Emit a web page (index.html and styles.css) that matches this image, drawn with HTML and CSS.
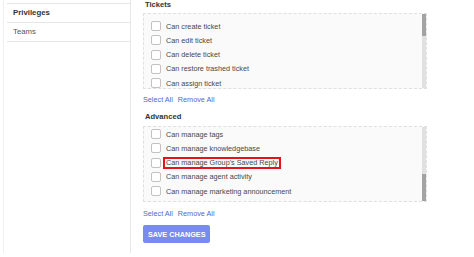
FILE: index.html
```html
<!DOCTYPE html>
<html lang="en">
<head>
<meta charset="utf-8">
<title>Privileges</title>
<link rel="stylesheet" href="styles.css">
</head>
<body>
<div class="page">
  <aside class="sidebar">
    <ul class="nav">
      <li class="nav-item active">Privileges</li>
      <li class="nav-item">Teams</li>
    </ul>
  </aside>
  <main class="main">
    <h3 class="group-title">Tickets</h3>
    <div class="perm-box">
      <div class="perm-list">
        <label class="perm"><input type="checkbox" class="cb"><span>Can create ticket</span></label>
        <label class="perm"><input type="checkbox" class="cb"><span>Can edit ticket</span></label>
        <label class="perm"><input type="checkbox" class="cb"><span>Can delete ticket</span></label>
        <label class="perm"><input type="checkbox" class="cb"><span>Can restore trashed ticket</span></label>
        <label class="perm"><input type="checkbox" class="cb"><span>Can assign ticket</span></label>
      </div>
      <div class="scroll-track"><div class="scroll-thumb thumb-top"></div></div>
    </div>
    <div class="bulk"><a href="#">Select All</a><a href="#">Remove All</a></div>

    <h3 class="group-title adv">Advanced</h3>
    <div class="perm-box">
      <div class="perm-list list-adv">
        <label class="perm"><input type="checkbox" class="cb"><span>Can manage tags</span></label>
        <label class="perm"><input type="checkbox" class="cb"><span>Can manage knowledgebase</span></label>
        <label class="perm"><input type="checkbox" class="cb"><span class="highlight">Can manage Group's Saved Reply</span></label>
        <label class="perm"><input type="checkbox" class="cb"><span>Can manage agent activity</span></label>
        <label class="perm"><input type="checkbox" class="cb"><span>Can manage marketing announcement</span></label>
      </div>
      <div class="scroll-track"><div class="scroll-thumb thumb-bottom"></div></div>
    </div>
    <div class="bulk bulk-last"><a href="#">Select All</a><a href="#">Remove All</a></div>

    <button class="save" type="button">Save Changes</button>
  </main>
</div>
</body>
</html>
```

FILE: styles.css
```css
html, body {
  margin: 0;
  padding: 0;
  background: #fff;
}
body {
  font-family: "Liberation Sans", Arial, sans-serif;
  color: #555;
}
.page {
  display: flex;
  align-items: stretch;
  padding-left: 3px;
}
.sidebar {
  width: 123px;
  padding-left: 3px;
  padding-top: 3px;
  border-left: 1px solid #f0f0f0;
  border-right: 1px solid #e8e8e8;
}
.nav {
  list-style: none;
  margin: 0;
  padding: 0;
  border-top: 1px solid #e6e6e6;
}
.nav-item {
  height: 18px;
  line-height: 18px;
  padding-left: 6px;
  font-size: 7.8px;
  color: #555;
  border-bottom: 1px solid #e6e6e6;
}
.nav-item.active {
  font-weight: bold;
  color: #333;
}
.main {
  margin-left: 12px;
  width: 284px;
  padding-bottom: 10px;
}
.group-title {
  margin: 0 0 3px;
  padding-left: 2px;
  font-size: 7.6px;
  line-height: 10px;
  font-weight: bold;
  color: #333;
}
.group-title.adv {
  margin-top: 7px;
  margin-bottom: 4px;
}
.perm-box {
  box-sizing: border-box;
  display: flex;
  height: 76px;
  border: 1px dashed #e0e0e0;
  background: #fafafa;
}
.perm-list {
  flex: 1;
  padding: 5px 0 0 7px;
}
.perm-list.list-adv {
  padding-top: 0;
}
.scroll-track {
  width: 4px;
  display: flex;
  flex-direction: column;
  background: #e1e1e1;
}
.scroll-thumb {
  background: #a3a3a3;
}
.thumb-top {
  height: 22px;
}
.thumb-bottom {
  height: 27px;
  margin-top: auto;
}
.perm {
  display: flex;
  align-items: center;
  gap: 5px;
  height: 14.25px;
  font-size: 7.25px;
  color: #484848;
}
.cb {
  -webkit-appearance: none;
  appearance: none;
  box-sizing: border-box;
  width: 10px;
  height: 10px;
  margin: 0;
  border: 1px solid #c2c2c2;
  border-radius: 2px;
  background: #fff;
  flex: none;
}
.highlight {
  display: inline-block;
  line-height: 8px;
  padding: 0 1px;
  margin: 0 -1px;
  outline: 2px solid #e3141c;
}
.bulk {
  display: flex;
  gap: 5px;
  margin-top: 6px;
  line-height: 10px;
  font-size: 7.25px;
}
.bulk.bulk-last {
  margin-top: 7px;
}
.bulk a {
  color: #4f68cf;
  text-decoration: none;
}
.save {
  display: block;
  margin-top: 6px;
  height: 18px;
  padding: 0 5px;
  border: none;
  border-radius: 2px;
  background: #7a8bef;
  color: #fff;
  font-family: "Liberation Sans", Arial, sans-serif;
  font-weight: bold;
  font-size: 7.25px;
  text-transform: uppercase;
}
```
